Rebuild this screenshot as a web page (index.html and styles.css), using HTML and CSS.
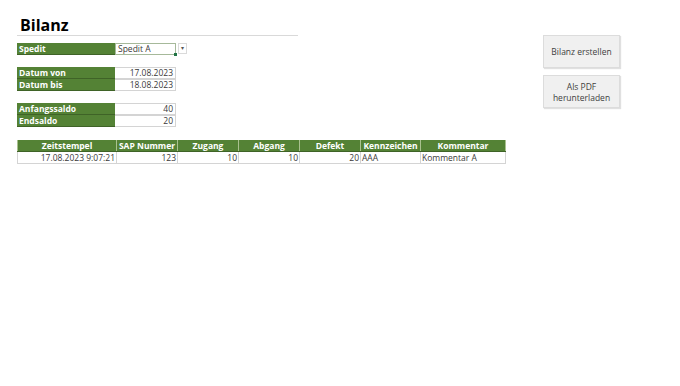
FILE: index.html
```html
<!DOCTYPE html>
<html lang="de">
<head>
    <meta charset="UTF-8">
    <title>Bilanz</title>
    <link rel="stylesheet" href="styles.css">
</head>
<body>

<div class="sheet">
    <div class="main">
        <h1 class="title">Bilanz</h1>

        <!-- Spedit Auswahl -->
        <div class="field-group first">
            <div class="label">Spedit</div>
            <div class="value select">Spedit A</div>
            <div class="dropdown">&#9662;</div>
        </div>

        <!-- Datum -->
        <div class="field-group">
            <div class="label">Datum von</div>
            <div class="value num">17.08.2023</div>
            <div class="label">Datum bis</div>
            <div class="value num">18.08.2023</div>
        </div>

        <!-- Saldo -->
        <div class="field-group">
            <div class="label">Anfangssaldo</div>
            <div class="value num">40</div>
            <div class="label">Endsaldo</div>
            <div class="value num">20</div>
        </div>

        <table class="data">
            <thead>
                <tr>
                    <th class="c1">Zeitstempel</th>
                    <th class="c2">SAP Nummer</th>
                    <th class="c3">Zugang</th>
                    <th class="c4">Abgang</th>
                    <th class="c5">Defekt</th>
                    <th class="c6">Kennzeichen</th>
                    <th class="c7">Kommentar</th>
                </tr>
            </thead>
            <tbody>
                <tr>
                    <td class="num">17.08.2023 9:07:21</td>
                    <td class="num">123</td>
                    <td class="num">10</td>
                    <td class="num">10</td>
                    <td class="num">20</td>
                    <td>AAA</td>
                    <td>Kommentar A</td>
                </tr>
            </tbody>
        </table>
    </div>

    <div class="actions">
        <button class="btn">Bilanz erstellen</button>
        <button class="btn">Als PDF<br>herunterladen</button>
    </div>
</div>

</body>
</html>
```

FILE: styles.css
```css
body {
    margin: 0;
    background-color: #ffffff;
    font-family: 'Open Sans', 'Liberation Sans', sans-serif;
    color: #3a3a3a;
}
.sheet {
    display: flex;
    align-items: flex-start;
    padding: 16px 0 0 17px;
}
.main {
    width: 488px;
}
.title {
    margin: 0;
    width: 278px;
    padding-left: 3px;
    height: 19px;
    line-height: 19px;
    font-size: 16px;
    font-weight: bold;
    color: #000;
    border-bottom: 1px solid #d9d9d9;
}
.field-group {
    display: grid;
    grid-template-columns: 98px 61px;
    grid-auto-rows: 12px;
    margin-top: 12px;
    font-size: 8.5px;
    line-height: 12px;
}
.field-group.first {
    grid-template-columns: 98px 61px 10px;
    margin-top: 7px;
}
.label {
    background-color: #548235;
    color: #fff;
    font-weight: bold;
    padding-left: 2px;
    border-bottom: 1px solid #3f6327;
    box-sizing: border-box;
}
.value {
    border: 1px solid #d4d4d4;
    border-left: none;
    padding: 0 2px;
    box-sizing: border-box;
    line-height: 10px;
    white-space: nowrap;
}
.value.select {
    border: 1px solid #a6b99a;
    position: relative;
}
.value.select::after {
    content: '';
    position: absolute;
    right: -2px;
    bottom: -2px;
    width: 3px;
    height: 3px;
    background-color: #217346;
}
.dropdown {
    margin-left: 2px;
    width: 9px;
    height: 11px;
    border: 1px solid #dadada;
    box-sizing: border-box;
    font-size: 6px;
    line-height: 9px;
    text-align: center;
    color: #555;
}
.num {
    text-align: right;
}
.data {
    margin-top: 13px;
    border-collapse: collapse;
    table-layout: fixed;
    width: 488px;
    font-size: 8.5px;
}
.data th {
    background-color: #548235;
    color: #fff;
    font-weight: bold;
    height: 11px;
    padding: 0;
    line-height: 10px;
    border: 1px solid #a9c18f;
    border-top: none;
    border-bottom: 1px solid #3f6327;
}
.data td {
    height: 11px;
    padding: 0 1px;
    line-height: 10px;
    border: 1px solid #d4d4d4;
    white-space: nowrap;
    overflow: hidden;
}
.c1 { width: 98px; }
.c2 { width: 60px; }
.c3 { width: 60px; }
.c4 { width: 60px; }
.c5 { width: 60px; }
.c6 { width: 59px; }
.c7 { width: 84px; }
.actions {
    display: flex;
    flex-direction: column;
    gap: 7px;
    margin: 19px 0 0 38px;
}
.btn {
    width: 77px;
    height: 33px;
    padding: 0;
    background-color: #f0f0f0;
    border: 1px solid #dcdcdc;
    box-shadow: 1px 1px 1px rgba(0, 0, 0, 0.12);
    font-family: 'Open Sans', 'Liberation Sans', sans-serif;
    font-size: 8.5px;
    line-height: 11px;
    color: #404040;
}
```
